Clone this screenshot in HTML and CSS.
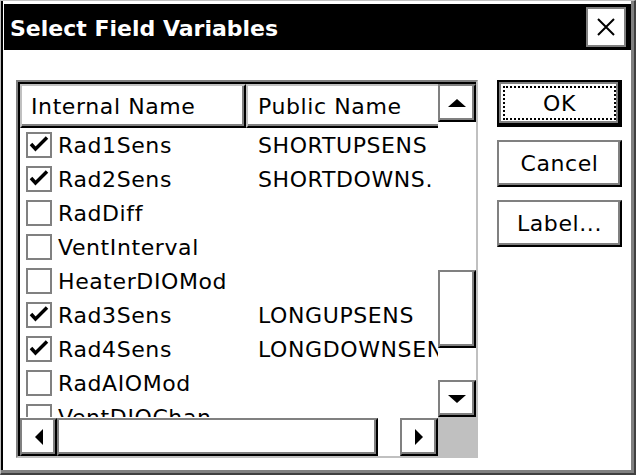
FILE: index.html
```html
<!DOCTYPE html>
<html>
<head>
<meta charset="utf-8">
<link rel="stylesheet" href="styles.css">
</head>
<body>
<div class="dialog">
  <div class="titlebar">
    <span class="title">Select Field Variables</span>
    <div class="close"><svg width="18" height="18" viewBox="0 0 18 18"><path d="M1 1 L17 17 M17 1 L1 17" stroke="#000" stroke-width="2" fill="none"/></svg></div>
  </div>
  <div class="client">
    <div class="listbox">
      <div class="list-inner">
        <div class="view">
          <div class="header">
            <div class="hcell c1">Internal Name</div>
            <div class="hcell c2">Public Name</div>
          </div>
          <div class="row"><div class="col1"><span class="cb"><svg width="22" height="22" viewBox="0 0 22 22"><path d="M3 10 L7.5 15 L19 3.5" stroke="#000" stroke-width="3.5" fill="none"/></svg></span><span class="name">Rad1Sens</span></div><span class="pub">SHORTUPSENS</span></div>
          <div class="row"><div class="col1"><span class="cb"><svg width="22" height="22" viewBox="0 0 22 22"><path d="M3 10 L7.5 15 L19 3.5" stroke="#000" stroke-width="3.5" fill="none"/></svg></span><span class="name">Rad2Sens</span></div><span class="pub">SHORTDOWNS.</span></div>
          <div class="row"><div class="col1"><span class="cb"></span><span class="name">RadDiff</span></div><span class="pub"></span></div>
          <div class="row"><div class="col1"><span class="cb"></span><span class="name">VentInterval</span></div><span class="pub"></span></div>
          <div class="row"><div class="col1"><span class="cb"></span><span class="name">HeaterDIOMod</span></div><span class="pub"></span></div>
          <div class="row"><div class="col1"><span class="cb"><svg width="22" height="22" viewBox="0 0 22 22"><path d="M3 10 L7.5 15 L19 3.5" stroke="#000" stroke-width="3.5" fill="none"/></svg></span><span class="name">Rad3Sens</span></div><span class="pub">LONGUPSENS</span></div>
          <div class="row"><div class="col1"><span class="cb"><svg width="22" height="22" viewBox="0 0 22 22"><path d="M3 10 L7.5 15 L19 3.5" stroke="#000" stroke-width="3.5" fill="none"/></svg></span><span class="name">Rad4Sens</span></div><span class="pub">LONGDOWNSENS</span></div>
          <div class="row"><div class="col1"><span class="cb"></span><span class="name">RadAIOMod</span></div><span class="pub"></span></div>
          <div class="row"><div class="col1"><span class="cb"></span><span class="name">VentDIOChan</span></div><span class="pub"></span></div>
        </div>
        <div class="vscroll">
          <div class="sbtn up"><span class="arr-up"></span></div>
          <div class="vtrack"><div class="vthumb"></div></div>
          <div class="sbtn down"><span class="arr-down"></span></div>
        </div>
        <div class="hscroll">
          <div class="sbtn left"><span class="arr-left"></span></div>
          <div class="hthumb"></div>
          <div class="htrack"></div>
          <div class="sbtn right"><span class="arr-right"></span></div>
        </div>
        <div class="corner"></div>
      </div>
    </div>
    <div class="buttons">
      <div class="btn default"><div class="focus">OK</div></div>
      <div class="btn">Cancel</div>
      <div class="btn">Label...</div>
    </div>
  </div>
</div>
</body>
</html>
```
FILE: styles.css
```css
html, body {
  margin: 0;
  padding: 0;
  background: #fff;
}
body {
  width: 636px;
  height: 475px;
  overflow: hidden;
  font-family: "DejaVu Sans", sans-serif;
  font-size: 22px;
  letter-spacing: 0.6px;
  color: #000;
}
.dialog {
  box-sizing: border-box;
  width: 636px;
  height: 475px;
  border-style: solid;
  border-width: 1px 2px 2px 1px;
  border-color: #c0c0c0 #404040 #404040 #c0c0c0;
  padding: 3px 3px 3px 3px;
  box-shadow: inset -3px -3px 0 #808080, inset 2px 0 0 #000;
  background: #fff;
  display: flex;
  flex-direction: column;
}
.titlebar {
  height: 46px;
  background: #000;
  color: #fff;
  display: flex;
  align-items: center;
  justify-content: space-between;
  flex: none;
}
.title {
  font-weight: bold;
  font-size: 22px;
  letter-spacing: 0;
  padding-left: 6px;
  padding-top: 3px;
  white-space: nowrap;
}
.close {
  box-sizing: border-box;
  width: 40px;
  height: 40px;
  margin-right: 5px;
  background: #fff;
  border: 2px solid #808080;
  display: flex;
  align-items: center;
  justify-content: center;
}
.client {
  display: flex;
  align-items: flex-start;
  padding: 30px 0 0 12px;
  gap: 19px;
}
.listbox {
  border-style: solid;
  border-width: 2px;
  border-color: #808080 #c0c0c0 #c0c0c0 #808080;
}
.list-inner {
  box-sizing: border-box;
  border-top: 2px solid #000;
  border-left: 2px solid #000;
  display: grid;
  grid-template-columns: 418px 38px;
  grid-template-rows: 333px 39px;
}
.view {
  overflow: hidden;
  background: #fff;
}
.header {
  display: flex;
  height: 44px;
}
.hcell {
  box-sizing: border-box;
  height: 44px;
  flex: none;
  border-style: solid;
  border-width: 2px;
  border-color: #c0c0c0 #000 #000 #c0c0c0;
  box-shadow: inset -2px -2px 0 #808080;
  padding-left: 9px;
  display: flex;
  align-items: center;
  white-space: nowrap;
}
.c1 { width: 226px; }
.c2 { width: 196px; padding-left: 10px; }
.row {
  height: 34px;
  display: flex;
  align-items: center;
  white-space: nowrap;
}
.col1 {
  width: 226px;
  flex: none;
  display: flex;
  align-items: center;
  padding-left: 6px;
  box-sizing: border-box;
}
.cb {
  box-sizing: border-box;
  width: 26px;
  height: 26px;
  border: 2px solid #808080;
  background: #fff;
  display: block;
  flex: none;
  margin-right: 6px;
}
.cb svg { display: block; }
.pub {
  padding-left: 12px;
  white-space: nowrap;
}
.vscroll {
  display: flex;
  flex-direction: column;
  background: #fff;
}
.sbtn {
  box-sizing: border-box;
  border-style: solid;
  border-width: 2px;
  border-color: #808080 #000 #000 #808080;
  box-shadow: inset -2px -2px 0 #808080;
  background: #fff;
  display: flex;
  align-items: center;
  justify-content: center;
  flex: none;
}
.up { height: 38px; }
.down { height: 37px; }
.vtrack {
  flex: 1;
  padding-top: 148px;
  box-sizing: border-box;
}
.vthumb, .hthumb {
  box-sizing: border-box;
  border-style: solid;
  border-width: 2px;
  border-color: #808080 #000 #000 #808080;
  box-shadow: inset -2px -2px 0 #808080;
  background: #fff;
}
.vthumb { height: 78px; }
.hscroll {
  display: flex;
  background: #fff;
  padding-top: 1px;
}
.left { width: 37px; }
.right { width: 38px; }
.hthumb { width: 321px; flex: none; }
.htrack { flex: 1; }
.corner { background: #c0c0c0; }
.arr-up {
  width: 0; height: 0;
  border-left: 9px solid transparent;
  border-right: 9px solid transparent;
  border-bottom: 8px solid #000;
}
.arr-down {
  width: 0; height: 0;
  border-left: 9px solid transparent;
  border-right: 9px solid transparent;
  border-top: 8px solid #000;
}
.arr-left {
  width: 0; height: 0;
  border-top: 8px solid transparent;
  border-bottom: 8px solid transparent;
  border-right: 8px solid #000;
}
.arr-right {
  width: 0; height: 0;
  border-top: 8px solid transparent;
  border-bottom: 8px solid transparent;
  border-left: 8px solid #000;
}
.buttons {
  display: flex;
  flex-direction: column;
  gap: 13px;
}
.btn {
  box-sizing: border-box;
  width: 125px;
  height: 47px;
  border-style: solid;
  border-width: 2px;
  border-color: #808080 #000 #000 #808080;
  box-shadow: inset -2px -2px 0 #808080;
  background: #fff;
  display: flex;
  align-items: center;
  justify-content: center;
}
.btn.default {
  border: 2px solid #000;
  box-shadow: inset -2px -2px 0 #000, inset -4px -4px 0 #808080, inset 2px 2px 0 #808080;
  padding: 4px 4px 5px 4px;
  align-items: stretch;
}
.focus {
  flex: 1;
  border: 2px dotted #000;
  display: flex;
  align-items: center;
  justify-content: center;
}
```
